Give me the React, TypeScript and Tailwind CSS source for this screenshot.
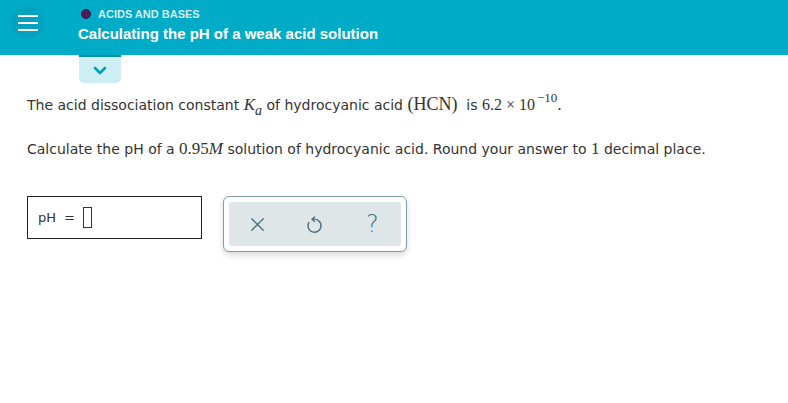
import { X } from "lucide-react";

const serif = "font-['Liberation_Serif',serif]";

function UndoIcon() {
  return (
    <svg width="19" height="19" viewBox="0 0 16 16" fill="none" stroke="currentColor" strokeWidth="1.2" strokeLinecap="round" strokeLinejoin="round">
      <path d="M6 3.5 H8 A5.5 5.5 0 1 1 3.24 6.25" />
      <path d="M8 1.6 L6 3.5 L8 5.4" />
    </svg>
  );
}

export default function App() {
  return (
    <div className="w-[788px] h-[403px] bg-white font-['DejaVu_Sans',Verdana,sans-serif] text-[#333] overflow-hidden">
      {/* Header */}
      <header className="h-[55px] bg-[#00abc8] flex items-start">
        <div className="w-[78px] pt-[6px] pl-[11px]">
          <button className="w-[33px] h-[33px] rounded-full bg-[#03a3bf] flex flex-col items-center justify-center gap-[5px]">
            <span className="block w-[20px] h-[2px] bg-white" />
            <span className="block w-[20px] h-[2px] bg-white" />
            <span className="block w-[20px] h-[2px] bg-white" />
          </button>
        </div>
        <div className="pt-[7px] font-['Liberation_Sans',Arial,sans-serif]">
          <div className="flex items-center gap-[7px] h-[14px] pl-[3px]">
            <span className="w-[10px] h-[10px] rounded-full bg-[#4e1d5c] border border-[#3a1446]" />
            <span className="text-[11px] font-bold text-[#d3eff4]">ACIDS AND BASES</span>
          </div>
          <h1 className="mt-[4px] text-[15px] font-bold text-white leading-[18px]">
            Calculating the pH of a weak acid solution
          </h1>
        </div>
      </header>

      {/* Collapse tab */}
      <div className="pl-[79px]">
        <button className="w-[42px] h-[28px] bg-[#cdeef3] border-t-2 border-[#0a8fa5] rounded-b-[5px] flex items-center justify-center">
          <svg width="14" height="9" viewBox="0 0 14 9">
            <path d="M2 2 L7 7 L12 2" fill="none" stroke="#00a0bc" strokeWidth="2.6" strokeLinecap="round" strokeLinejoin="round" />
          </svg>
        </button>
      </div>

      {/* Problem text */}
      <div className="pl-[27px] pt-[8px] text-[14px]">
        <p className="flex items-baseline h-[24px]">
          <span>The acid dissociation constant&nbsp;</span>
          <span className={`${serif} italic text-[17px]`}>K</span>
          <span className={`${serif} italic text-[14px] relative top-[5px]`}>a</span>
          <span>&nbsp;of hydrocyanic acid&nbsp;</span>
          <span className={`${serif} text-[18px]`}>(HCN)</span>
          <span>&nbsp;&nbsp;is&nbsp;</span>
          <span className={`${serif} text-[16px]`}>6.2&nbsp;×&nbsp;10</span>
          <span className={`${serif} text-[13px] relative -top-[8px] ml-[2px]`}>&minus;10</span>
          <span className={`${serif} text-[16px]`}>.</span>
        </p>
        <p className="flex items-baseline h-[24px] mt-[21px]">
          <span>Calculate the pH of a&nbsp;</span>
          <span className={`${serif} text-[17px]`}>0.95</span>
          <span className={`${serif} italic text-[17px]`}>M</span>
          <span>&nbsp;solution of hydrocyanic acid. Round your answer to&nbsp;</span>
          <span className={`${serif} text-[17px]`}>1</span>
          <span>&nbsp;decimal place.</span>
        </p>
      </div>

      {/* Answer row */}
      <div className="flex items-start pl-[27px] mt-[36px] gap-[21px]">
        <div className="w-[175px] h-[43px] border border-[#222] flex items-center pl-[10px] gap-[4px] text-[13px]">
          <span>pH</span>
          <span className="mx-[4px]">=</span>
          <span className="w-[9px] h-[21px] border border-[#1a1aff]" />
        </div>
        <div className="w-[184px] h-[56px] rounded-[6px] border border-[#7f9ea8] bg-white p-[5px] shadow-[0_3px_6px_rgba(0,0,0,0.15)]">
          <div className="h-full rounded-[3px] bg-[#dfe6e8] grid grid-cols-3 place-items-center text-[#4b6f7b]">
            <X size={23} strokeWidth={1.3} />
            <UndoIcon />
            <span className="font-['DejaVu_Sans',sans-serif] text-[24px] leading-none font-extralight">?</span>
          </div>
        </div>
      </div>
    </div>
  );
}
